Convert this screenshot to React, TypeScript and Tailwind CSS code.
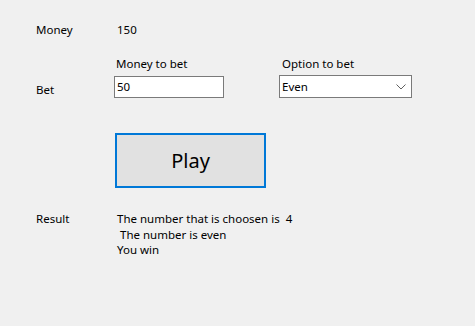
import React from 'react';

export default function App() {
  return (
    <div
      className="w-[475px] h-[326px] bg-[#f0f0f0] text-[11.5px] leading-[15px] text-black pl-[36px] overflow-hidden"
      style={{ fontFamily: '"Noto Sans", "Open Sans", sans-serif' }}
    >
      {/* Money row */}
      <div className="flex pt-[22px]">
        <span className="w-[81px]">Money</span>
        <span>150</span>
      </div>

      {/* Headers */}
      <div className="flex mt-[19px]">
        <span className="w-[80px]" />
        <span className="w-[166px]">Money to bet</span>
        <span>Option to bet</span>
      </div>

      {/* Bet row */}
      <div className="flex items-center mt-[4px]">
        <span className="w-[78px] pt-[5px]">Bet</span>
        <div className="w-[110px] h-[22px] border border-[#7a7a7a] bg-white pl-[2px] flex items-center">
          50
        </div>
        <div className="ml-[55px] w-[133px] h-[23px] border border-[#7a7a7a] bg-white pl-[2px] pr-[4px] flex items-center justify-between">
          <span>Even</span>
          <svg width="10" height="6" viewBox="0 0 10 6" className="mr-[1px]">
            <polyline points="0.5,0.5 5,5 9.5,0.5" fill="none" stroke="#606060" strokeWidth="1" />
          </svg>
        </div>
      </div>

      {/* Play button */}
      <div className="ml-[79px] mt-[35px] w-[151px] h-[55px] border-2 border-[#0078d7] bg-[#e1e1e1] flex items-center justify-center text-[20px] leading-none">
        Play
      </div>

      {/* Result */}
      <div className="flex mt-[23px]">
        <span className="w-[81px]">Result</span>
        <div className="flex flex-col whitespace-pre leading-[15.5px]">
          <span>The number that is choosen is  4</span>
          <span> The number is even</span>
          <span>You win</span>
        </div>
      </div>
    </div>
  );
}
